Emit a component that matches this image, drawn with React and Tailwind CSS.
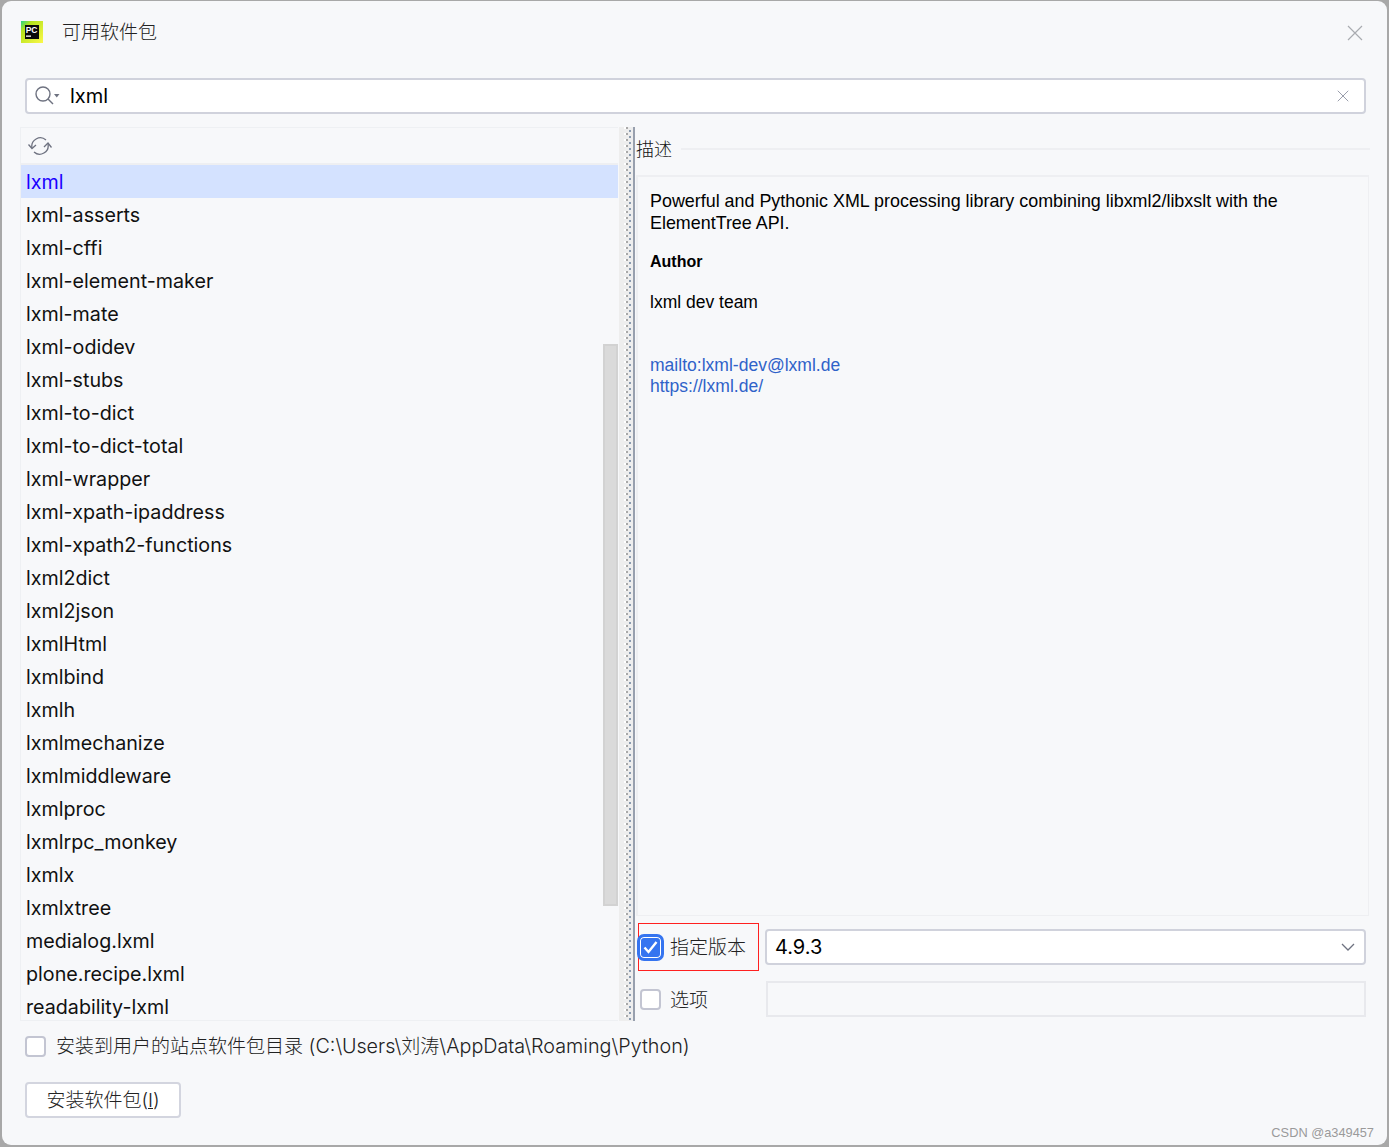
const names = [
  'lxml-asserts', 'lxml-cffi', 'lxml-element-maker', 'lxml-mate', 'lxml-odidev', 'lxml-stubs', 'lxml-to-dict',
  'lxml-to-dict-total', 'lxml-wrapper', 'lxml-xpath-ipaddress', 'lxml-xpath2-functions', 'lxml2dict', 'lxml2json',
  'lxmlHtml', 'lxmlbind', 'lxmlh', 'lxmlmechanize', 'lxmlmiddleware', 'lxmlproc', 'lxmlrpc_monkey', 'lxmlx',
  'lxmlxtree', 'medialog.lxml', 'plone.recipe.lxml', 'readability-lxml',
];

const cjk = "font-['Inter','Noto_Sans_CJK_SC',sans-serif]";

function PyCharmLogo() {
  return (
    <svg width="22" height="22" viewBox="0 0 22 22" className="shrink-0">
      <defs>
        <linearGradient id="pc" x1="0" y1="0" x2="1" y2="1">
          <stop offset="0" stopColor="#21d789" />
          <stop offset="0.25" stopColor="#b4e31c" />
          <stop offset="1" stopColor="#fcf84a" />
        </linearGradient>
      </defs>
      <rect width="22" height="22" fill="url(#pc)" />
      <rect x="4" y="4" width="14" height="14" fill="#0a0a0a" />
      <text x="4.700" y="11.800" fontSize="8.500" fontWeight="700" fill="#fff" fontFamily="Liberation Sans">PC</text>
      <rect x="5" y="14.500" width="5" height="1.300" fill="#fff" />
    </svg>
  );
}

function CloseIcon({ size, color }) {
  return (
    <svg width={size} height={size} viewBox="0 0 16 16" fill="none" stroke={color} strokeWidth="1.200">
      <path d="M1 1l14 14M15 1L1 15" />
    </svg>
  );
}

function SearchIcon() {
  return (
    <svg className="shrink-0" width="26" height="22" viewBox="0 0 26 22" fill="none" stroke="#6e7280" strokeWidth="1.400">
      <circle cx="9" cy="9" r="7" />
      <path d="M14 14l5 5" />
      <path d="M20 9h5.500l-2.750 3.500z" fill="#6e7280" stroke="none" />
    </svg>
  );
}

function RefreshIcon() {
  return (
    <svg width="24" height="20" viewBox="0 0 24 20" fill="none" stroke="#6e7280" strokeWidth="1.300">
      <path d="M4 12A8.500 8.500 0 0 1 18 4" />
      <path d="M0.500 8.500L4 12.500 8 9" />
      <path d="M20 8A8.500 8.500 0 0 1 6 16" />
      <path d="M16 11l4-4 3.500 4.500" />
    </svg>
  );
}

function Checkbox({ checked }) {
  if (checked) {
    return (
      <div className="-ml-[2px] box-border flex h-[27px] w-[27px] shrink-0 items-center justify-center rounded-[7px] border-[3px] border-[#3574f0] bg-[#3574f0] shadow-[inset_0_0_0_1px_#fff]">
        <svg width="15" height="13" viewBox="0 0 15 13" fill="none" stroke="#fff" strokeWidth="2.400">
          <path d="M1.500 6.500l4 4.500 8-10" />
        </svg>
      </div>
    );
  }
  return <div className="box-border h-[21px] w-[21px] shrink-0 rounded-[4px] border-2 border-[#c3c5d2] bg-white" />;
}

export default function App() {
  return (
    <div className="h-[1147px] w-[1389px] overflow-hidden bg-[#a8a8a8] pt-px pr-[2px] pb-[2px] pl-[2px]">
      <div className={`flex h-full flex-col rounded-[9px] bg-[#f7f8fa] text-black ${cjk}`}>
        <div className="flex h-[77px] shrink-0 items-start pt-[20px] pr-[24px] pl-[19px]">
          <PyCharmLogo />
          <span className="ml-[19px] pt-[1px] text-[19px] leading-[22px] font-light text-[#222]">可用软件包</span>
          <div className="ml-auto pt-[4px]">
            <CloseIcon size={16} color="#a9abb0" />
          </div>
        </div>

        <div className="mr-[21px] ml-[23px] flex h-[36px] shrink-0 items-center rounded-[4px] border-2 border-[#d0d2dc] bg-white pr-[15px] pl-[7px]">
          <SearchIcon />
          <span className="ml-[10px] text-[20px]">lxml</span>
          <div className="ml-auto">
            <CloseIcon size={12} color="#8f93a3" />
          </div>
        </div>

        <div className="mt-[13px] flex h-[894px] shrink-0 pl-[18px]">
          <div className="relative h-full w-[598px] shrink-0 overflow-hidden border border-r-0 border-[#eef0f3]">
            <div className="flex h-[37px] items-center border-b-2 border-[#eeeff2] pl-[7px]">
              <RefreshIcon />
            </div>
            <div className="flex h-[33px] items-center bg-[#d4e2ff] pt-[2px] pl-[5px] text-[19.700px] text-[#1a00ff]">lxml</div>
            {names.map((name) => (
              <div key={name} className="flex h-[33px] items-center pt-[2px] pl-[5px] text-[19.700px] text-[#111]">{name}</div>
            ))}
            <div className="absolute top-[216px] right-0 h-[562px] w-[15px] border-2 border-[#d2d2d2] bg-[#dadada]" />
          </div>

          <div className="ml-[1px] flex h-full w-[14px] shrink-0 bg-[#eeeeee] pl-[5px]">
            <div className="h-full w-[2px] bg-[repeating-linear-gradient(to_bottom,#ffffff_0,#ffffff_2px,transparent_2px,transparent_6px)]" />
            <div className="h-full w-[2px] bg-[repeating-linear-gradient(to_bottom,#a8a8a8_0,#a8a8a8_2px,transparent_2px,transparent_6px)]" />
            <div className="ml-[1px] h-full w-[2px] bg-[repeating-linear-gradient(to_bottom,transparent_0,transparent_3px,#8a9bb0_3px,#8a9bb0_5px,transparent_5px,transparent_6px)]" />
          </div>
          <div className="h-full w-[2px] shrink-0 bg-[#98a0ae]" />

          <div className="flex min-w-0 flex-1 flex-col pl-[1px]">
            <div className="flex h-[48px] shrink-0 items-center pr-[17px] pb-[4px]">
              <span className="text-[18px] font-light text-[#111]">描述</span>
              <div className="ml-[9px] h-[2px] flex-1 bg-[#eeeff2]" />
            </div>
            <div className="mr-[18px] h-[741px] shrink-0 border-2 border-r border-b border-[#eeeff2] pt-[13px] pl-[12px] font-['Liberation_Sans',sans-serif] text-[17.900px] leading-[21px]">
              <p className="leading-[22px]">Powerful and Pythonic XML processing library combining libxml2/libxslt with the<br />ElementTree API.</p>
              <p className="mt-[17px] text-[16px] font-bold">Author</p>
              <p className="mt-[20px] text-[17.500px]">lxml dev team</p>
              <p className="mt-[42px] text-[17.550px] text-[#2f62c9]">mailto:lxml-dev@lxml.de<br />https://lxml.de/</p>
            </div>
            <div className="mt-[7px] flex h-[48px] shrink-0 items-center pr-[21px] pl-[2px]">
              <div className="flex h-full w-[121px] shrink-0 items-center border border-[#ff2020]">
                <Checkbox checked />
                <span className="ml-[6px] pt-[3px] text-[19px] font-light text-[#222]">指定版本</span>
              </div>
              <div className="ml-[6px] flex h-[36px] flex-1 items-center rounded-[4px] border-2 border-[#d0d2dc] bg-white pr-[9px] pl-[8px] text-[20px]">
                4.9.3
                <svg className="ml-auto" width="14" height="8" viewBox="0 0 14 8" fill="none" stroke="#6e7280" strokeWidth="1.300">
                  <path d="M1 1l6 6 6-6" />
                </svg>
              </div>
            </div>
            <div className="mt-[10px] flex h-[36px] shrink-0 items-center pr-[21px] pl-[4px]">
              <Checkbox />
              <span className="ml-[9px] w-[96px] shrink-0 pt-[5px] text-[19px] font-light text-[#222]">选项</span>
              <div className="h-[36px] flex-1 border-2 border-[#e8e9ed]" />
            </div>
          </div>
        </div>

        <div className="mt-[14px] flex h-[22px] shrink-0 items-center pl-[23px]">
          <Checkbox />
          <span className="ml-[10px] pt-[1px] text-[19.750px] font-light text-[#222]">
            <span className="text-[19px]">安装到用户的站点软件包目录</span> (C:\Users\<span className="text-[19px]">刘涛</span>\AppData\Roaming\Python)
          </span>
        </div>

        <div className="mt-[25px] ml-[23px] flex h-[36px] w-[156px] shrink-0 items-center justify-center rounded-[4px] border-2 border-[#d3d5df] bg-white pt-[2px] text-[19px] font-light text-[#222]">
          安装软件包(<span className="underline">I</span>)
        </div>

        <div className="mt-auto pr-[13px] pb-[5px] text-right font-['Liberation_Sans',sans-serif] text-[12.800px] leading-[14px] text-[#9a9a9a]">CSDN @a349457</div>
      </div>
    </div>
  );
}
